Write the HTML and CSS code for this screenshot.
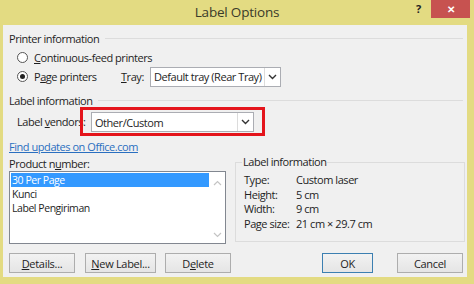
FILE: index.html
```html
<!DOCTYPE html>
<html lang="en">
<head>
    <meta charset="UTF-8">
    <title>Label Options</title>
    <link rel="stylesheet" href="styles.css">
</head>
<body>
    <div class="window">
        <div class="titlebar">
            <span class="title">Label Options</span>
            <span class="help">?</span>
            <span class="close">&#x2715;</span>
        </div>
        <div class="content">
            <div class="section-head"><span>Printer information</span><i></i></div>
            <div class="radio-row first">
                <span class="radio"></span>
                <span><u>C</u>ontinuous-feed printers</span>
            </div>
            <div class="radio-row">
                <span class="radio checked"></span>
                <span class="page-label">P<u>a</u>ge printers</span>
                <span class="tray-label"><u>T</u>ray:</span>
                <div class="select tray">
                    <span class="select-text">Default tray (Rear Tray)</span>
                    <span class="select-arrow"><svg width="9" height="6" viewBox="0 0 9 6"><path d="M1 1 L4.5 4.5 L8 1" fill="none" stroke="#333" stroke-width="1.4"/></svg></span>
                </div>
            </div>
            <div class="section-head second"><span>Label information</span><i></i></div>
            <div class="vendor-row">
                <span class="vendor-label">Label <u>v</u>endors:</span>
                <div class="highlight">
                    <div class="select vendor">
                        <span class="select-text">Other/Custom</span>
                        <span class="select-arrow"><svg width="9" height="6" viewBox="0 0 9 6"><path d="M1 1 L4.5 4.5 L8 1" fill="none" stroke="#333" stroke-width="1.4"/></svg></span>
                    </div>
                </div>
            </div>
            <div class="link-row"><a class="link">Find updates on Office.com</a></div>
            <div class="lower">
                <div class="product">
                    <div class="product-label">Product n<u>u</u>mber:</div>
                    <div class="listbox">
                        <div class="items">
                            <div class="item selected">30 Per Page</div>
                            <div class="item">Kunci</div>
                            <div class="item">Label Pengiriman</div>
                        </div>
                        <div class="scroll">
                            <svg width="9" height="6" viewBox="0 0 9 6"><path d="M1 5 L4.5 1.5 L8 5" fill="none" stroke="#c4c4c4" stroke-width="1.2"/></svg>
                            <svg width="9" height="6" viewBox="0 0 9 6"><path d="M1 1 L4.5 4.5 L8 1" fill="none" stroke="#c4c4c4" stroke-width="1.2"/></svg>
                        </div>
                    </div>
                </div>
                <div class="info">
                    <div class="info-title">Label information</div>
                    <div class="info-grid">
                        <span>Type:</span><span>Custom laser</span>
                        <span>Height:</span><span>5 cm</span>
                        <span>Width:</span><span>9 cm</span>
                        <span>Page size:</span><span>21 cm &times; 29.7 cm</span>
                    </div>
                </div>
            </div>
            <div class="buttons">
                <button class="btn details"><u>D</u>etails...</button>
                <button class="btn newlabel"><u>N</u>ew Label...</button>
                <button class="btn delete">D<u>e</u>lete</button>
                <span class="spacer"></span>
                <button class="btn ok">OK</button>
                <button class="btn cancel">Cancel</button>
            </div>
        </div>
    </div>
</body>
</html>
```
FILE: styles.css
```css
body {
    margin: 0;
    font-family: "Open Sans", "Noto Sans", sans-serif;
    font-size: 11px;
    letter-spacing: -0.45px;
    color: #1e1e1e;
}
.window {
    width: 474px;
    height: 284px;
    background-color: #e3db82;
    display: flex;
    flex-direction: column;
    overflow: hidden;
}
.titlebar {
    height: 25px;
    flex-shrink: 0;
    position: relative;
}
.title {
    position: absolute;
    left: 0;
    right: 0;
    top: 3px;
    text-align: center;
    font-size: 13.5px;
    letter-spacing: -0.2px;
    color: #3a3a2a;
}
.help {
    position: absolute;
    left: 416px;
    top: 1px;
    font-weight: bold;
    font-size: 11px;
    color: #222;
}
.close {
    position: absolute;
    left: 431px;
    top: 0;
    width: 39px;
    height: 18px;
    background-color: #c75250;
    color: #fff;
    font-size: 10px;
    font-weight: bold;
    display: flex;
    align-items: center;
    justify-content: center;
}
.content {
    flex: 1;
    min-height: 0;
    overflow: hidden;
    margin: 0 7px 7px 3px;
    background-color: #f0f0f0;
    padding: 6px 2px 0 6px;
    display: flex;
    flex-direction: column;
    white-space: nowrap;
}
.section-head {
    display: flex;
    align-items: center;
    gap: 6px;
    height: 14px;
    flex-shrink: 0;
}
.section-head i {
    flex: 1;
    border-top: 1px solid #dcdcdc;
    margin-right: 2px;
}
.section-head.second {
    margin-top: 7px;
}
.radio-row {
    display: flex;
    align-items: center;
    height: 19px;
    padding-left: 8px;
    flex-shrink: 0;
}
.radio-row.first {
    margin-top: 3px;
}
.radio {
    width: 9px;
    height: 9px;
    border: 1px solid #555;
    border-radius: 50%;
    background: #fff;
    margin-right: 6px;
    display: flex;
    align-items: center;
    justify-content: center;
}
.radio.checked::after {
    content: "";
    width: 5px;
    height: 5px;
    border-radius: 50%;
    background: #222;
}
.page-label {
    width: 87px;
}
.tray-label {
    width: 29px;
}
.select {
    height: 18px;
    border: 1px solid #abadb3;
    background: #fff;
    display: flex;
    align-items: center;
}
.select-text {
    flex: 1;
    padding-left: 3px;
    overflow: hidden;
}
.select-arrow {
    width: 15px;
    height: 100%;
    border-left: 1px solid #dcdcdc;
    display: flex;
    align-items: center;
    justify-content: center;
}
.tray {
    width: 129px;
}
.vendor-row {
    display: flex;
    align-items: center;
    padding-left: 8px;
    flex-shrink: 0;
}
.vendor-label {
    width: 63px;
}
.highlight {
    border: 3px solid #e4141b;
    padding: 2px 8px 1px 8px;
}
.vendor {
    width: 161px;
}
.link-row {
    height: 14px;
    margin-top: 3px;
    flex-shrink: 0;
}
.link {
    color: #2a6fc0;
    text-decoration: underline;
}
.lower {
    display: flex;
    margin-top: 1px;
    flex-shrink: 0;
}
.product {
    width: 217px;
    margin-top: 2px;
}
.product-label {
    height: 15px;
}
.listbox {
    height: 73px;
    box-sizing: border-box;
    border: 1px solid #828790;
    background: #fff;
    display: flex;
    padding: 1px 0 0 1px;
}
.items {
    flex: 1;
}
.item {
    height: 14px;
    line-height: 14px;
    font-size: 10.5px;
    padding-left: 1px;
}
.item.selected {
    background: #3399ff;
    color: #fff;
}
.scroll {
    width: 16px;
    display: flex;
    flex-direction: column;
    justify-content: space-between;
    align-items: center;
    padding: 7px 0 5px;
}
.info {
    margin-left: 9px;
    margin-top: 8px;
    width: 230px;
    height: 80px;
    border: 1px solid #dcdcdc;
    padding: 0 6px;
    box-sizing: border-box;
}
.info-title {
    width: max-content;
    margin-top: -9px;
    height: 15px;
    padding: 0 1px;
    background: #f0f0f0;
}
.info-grid {
    display: grid;
    grid-template-columns: 52px auto;
    grid-auto-rows: 14.7px;
    padding-left: 2px;
    margin-top: 3px;
}
.buttons {
    display: flex;
    margin-top: 9px;
    flex-shrink: 0;
}
.btn {
    font-family: inherit;
    font-size: 11px;
    letter-spacing: -0.3px;
    height: 20px;
    border: 1px solid #adadad;
    background: linear-gradient(#f2f2f2, #e5e5e5);
    color: #1e1e1e;
    padding: 0;
    margin-right: 10px;
}
.details { width: 66px; }
.newlabel { width: 71px; margin-right: 9px; }
.delete { width: 66px; }
.spacer { flex: 1; }
.ok {
    width: 51px;
    border-color: #3c7fb1;
    margin-right: 24px;
}
.cancel {
    width: 66px;
    margin-right: 2px;
}
```
